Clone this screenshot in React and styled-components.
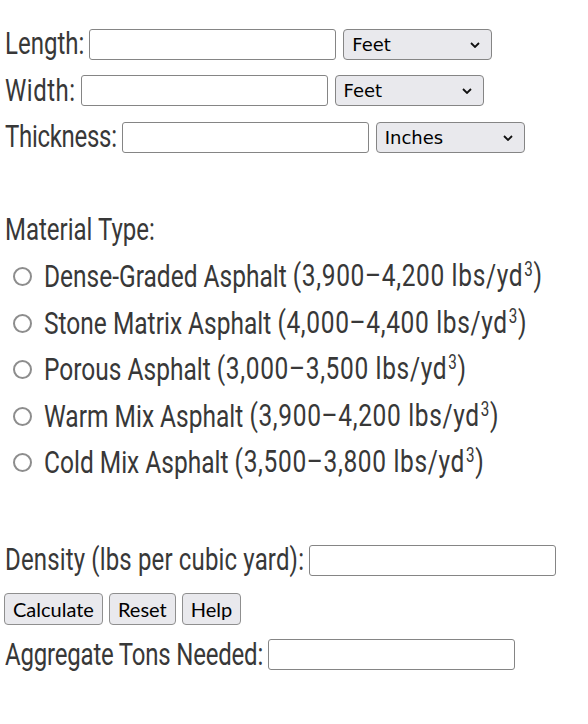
import styled, { createGlobalStyle } from "styled-components";

const GlobalStyle = createGlobalStyle`
  body {
    margin: 0;
    background: #ffffff;
  }
`;

const Form = styled.form`
  padding: 21px 4px 20px 5px;
  font-family: Roboto, "Noto Sans", sans-serif;
  font-weight: 400;
  color: #383838;
  display: flex;
  flex-direction: column;
`;

const Row = styled.div`
  display: flex;
  align-items: center;
  gap: 5px;
  min-height: 46.5px;
  white-space: nowrap;
`;

// tall, narrow label lettering
const Label = styled.span`
  display: inline-block;
  font-size: ${(p) => p.$size ?? 24}px;
  letter-spacing: ${(p) => p.$track ?? 0}px;
  line-height: 1;
  transform: scaleY(1.3);
`;

const Range = styled.span`
  letter-spacing: 0.65px;
`;

const Sup = styled.span`
  font-size: 0.62em;
  vertical-align: 0.55em;
  margin-left: 1px;
`;

const Spacer = styled.div`
  height: ${(p) => p.$h}px;
`;

const TextBox = styled.input`
  box-sizing: border-box;
  width: 247px;
  height: 31px;
  border: 1px solid #858585;
  border-radius: 3px;
  background: #ffffff;
  margin: 0;
`;

const SelectWrap = styled.div`
  position: relative;
  margin-left: 2px;
`;

const Select = styled.select`
  appearance: none;
  box-sizing: border-box;
  width: 149px;
  height: 31px;
  padding: 0 8px;
  border: 1px solid #858585;
  border-radius: 4px;
  background: #e9e9ed;
  color: #000000;
  font-family: "DejaVu Sans", Verdana, sans-serif;
  font-size: 18px;
`;

const Chevron = styled.svg`
  position: absolute;
  right: 12px;
  top: 13px;
  pointer-events: none;
`;

const RadioLabel = styled.label`
  display: flex;
  align-items: center;
  gap: 12px;
  padding-left: 8px;
`;

const Radio = styled.span`
  box-sizing: border-box;
  width: 19px;
  height: 19px;
  border: 2px solid #8d8d8d;
  border-radius: 50%;
  flex-shrink: 0;
`;

const Buttons = styled.div`
  display: flex;
  gap: 6px;
  margin: 9px 0 7px -1px;
`;

const Button = styled.button`
  box-sizing: border-box;
  height: 32px;
  padding: 0 8px;
  border: 1px solid #8f8f8f;
  border-radius: 4px;
  background: #e9e9ed;
  color: #000000;
  font-family: Lato, "Noto Sans", sans-serif;
  font-size: 20px;
`;

const UnitSelect = ({ value, options }) => (
  <SelectWrap>
    <Select defaultValue={value}>
      {options.map((o) => (
        <option key={o}>{o}</option>
      ))}
    </Select>
    <Chevron width="10" height="6" viewBox="0 0 10 6">
      <path d="M1 1l4 4 4-4" fill="none" stroke="#111" strokeWidth="1.8" />
    </Chevron>
  </SelectWrap>
);

const units = ["Feet", "Inches", "Yards", "Meters", "Centimeters"];

const materials = [
  ["Dense-Graded Asphalt", "3,900–4,200"],
  ["Stone Matrix Asphalt", "4,000–4,400"],
  ["Porous Asphalt", "3,000–3,500"],
  ["Warm Mix Asphalt", "3,900–4,200"],
  ["Cold Mix Asphalt", "3,500–3,800"],
];

const dimensions = [
  ["Length:", "Feet", 0],
  ["Width:", "Feet", 0.5],
  ["Thickness:", "Inches", -0.3],
];

export default function App() {
  return (
    <>
      <GlobalStyle />
      <Form onSubmit={(e) => e.preventDefault()}>
        {dimensions.map(([label, unit, track]) => (
          <Row key={label}>
            <Label $track={track}>{label}</Label>
            <TextBox type="text" />
            <UnitSelect value={unit} options={units} />
          </Row>
        ))}
        <Spacer $h={46.5} />
        <Row>
          <Label>Material Type:</Label>
        </Row>
        {materials.map(([name, range]) => (
          <Row key={name}>
            <RadioLabel>
              <Radio />
              <Label $size={24.5}>
                {name}{" "}
                <Range>
                  ({range} lbs/yd<Sup>3</Sup>)
                </Range>
              </Label>
            </RadioLabel>
          </Row>
        ))}
        <Spacer $h={51} />
        <Row>
          <Label $track={0.15}>Density (lbs per cubic yard):</Label>
          <TextBox type="text" />
        </Row>
        <Buttons>
          <Button type="button">Calculate</Button>
          <Button type="button">Reset</Button>
          <Button type="button">Help</Button>
        </Buttons>
        <Row>
          <Label $track={-0.2}>Aggregate Tons Needed:</Label>
          <TextBox type="text" />
        </Row>
      </Form>
    </>
  );
}
